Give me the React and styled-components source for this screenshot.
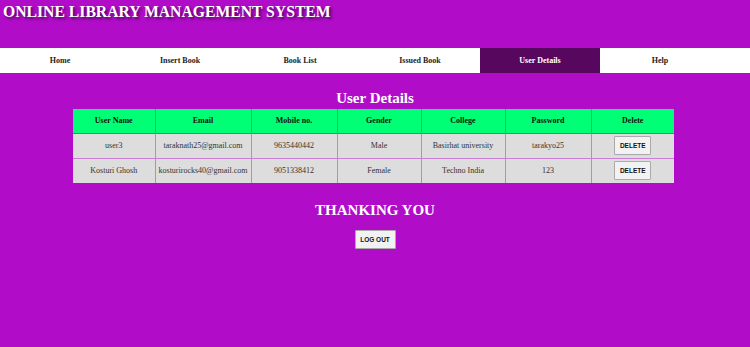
import React from "react";
import styled, { createGlobalStyle } from "styled-components";

const Global = createGlobalStyle`
  html, body { margin: 0; padding: 0; }
  body {
    background: #b10dc9;
    font-family: "Liberation Serif", "Times New Roman", serif;
    width: 750px;
    min-height: 347px;
  }
`;

const Header = styled.header`
  height: 48px;
  box-sizing: border-box;
  padding: 3px 3px 0;
`;

const Title = styled.h1`
  margin: 0;
  font-size: 15.7px;
  font-weight: bold;
  color: #fff;
  line-height: 18px;
  text-shadow: 2px 2px 3px rgba(40, 0, 50, 0.75);
`;

const Nav = styled.ul`
  list-style: none;
  margin: 0;
  padding: 0;
  display: flex;
  background: #fff;
  height: 25px;
`;

const NavItem = styled.li`
  width: 120px;
  flex: none;
  text-align: center;
  line-height: 25px;
  font-size: 8px;
  font-weight: bold;
  color: ${(p) => (p.$active ? "#fff" : "#222")};
  background: ${(p) => (p.$active ? "#58075f" : "transparent")};
`;

const Main = styled.main`
  display: flex;
  flex-direction: column;
  align-items: center;
`;

const Heading = styled.h2`
  margin: 17px 0 2px;
  font-size: 15px;
  line-height: 17px;
  color: #fff;
  font-weight: bold;
`;

const Table = styled.table`
  width: 601px;
  margin-right: 3px;
  table-layout: fixed;
  border-collapse: collapse;
  border-spacing: 0;
`;

const Th = styled.th`
  background: #00ff75;
  height: 24px;
  padding: 0;
  box-sizing: border-box;
  font-size: 8px;
  font-weight: bold;
  color: #111;
  text-align: center;
  border-left: ${(p) => (p.$first ? "none" : "1px solid #4f9798")};
`;

const Td = styled.td`
  background: #dddddd;
  height: 25px;
  padding: 0;
  box-sizing: border-box;
  font-size: 8px;
  color: #333;
  text-align: center;
  border-top: 1px solid ${(p) => (p.$firstRow ? "#a94ab8" : "#c97fd6")};
  border-left: ${(p) => (p.$first ? "none" : "1px solid #c97fd6")};
`;

const SmallButton = styled.button`
  font-family: "Liberation Sans", Arial, sans-serif;
  font-size: 6.5px;
  font-weight: bold;
  color: #111;
  background: #f2f2f2;
  border: 1px solid #aaa;
  border-radius: 1px;
  padding: 0;
  width: ${(p) => p.$w}px;
  height: ${(p) => p.$h}px;
  cursor: pointer;
`;

const Thanks = styled.h2`
  margin: 19px 0 11px;
  font-size: 15px;
  line-height: 17px;
  color: #fff;
  font-weight: bold;
`;

const cols = [82, 96, 86, 84, 84, 86, 83];
const heads = ["User Name", "Email", "Mobile no.", "Gender", "College", "Password", "Delete"];
const rows = [
  ["user3", "taraknath25@gmail.com", "9635440442", "Male", "Basirhat university", "tarakyo25"],
  ["Kosturi Ghosh", "kosturirocks40@gmail.com", "9051338412", "Female", "Techno India", "123"],
];
const navs = ["Home", "Insert Book", "Book List", "Issued Book", "User Details", "Help"];

export default function App() {
  return (
    <>
      <Global />
      <Header>
        <Title>ONLINE LIBRARY MANAGEMENT SYSTEM</Title>
      </Header>
      <Nav>
        {navs.map((n) => (
          <NavItem key={n} $active={n === "User Details"}>
            {n}
          </NavItem>
        ))}
      </Nav>
      <Main>
        <Heading>User Details</Heading>
        <Table>
          <colgroup>
            {cols.map((w, i) => (
              <col key={i} style={{ width: w }} />
            ))}
          </colgroup>
          <thead>
            <tr>
              {heads.map((h, i) => (
                <Th key={h} $first={i === 0}>
                  {h}
                </Th>
              ))}
            </tr>
          </thead>
          <tbody>
            {rows.map((r, ri) => (
              <tr key={ri}>
                {r.map((c, i) => (
                  <Td key={i} $first={i === 0} $firstRow={ri === 0}>
                    {c}
                  </Td>
                ))}
                <Td $firstRow={ri === 0}>
                  <SmallButton $w={37} $h={19}>DELETE</SmallButton>
                </Td>
              </tr>
            ))}
          </tbody>
        </Table>
        <Thanks>THANKING YOU</Thanks>
        <SmallButton $w={41} $h={19}>LOG OUT</SmallButton>
      </Main>
    </>
  );
}
